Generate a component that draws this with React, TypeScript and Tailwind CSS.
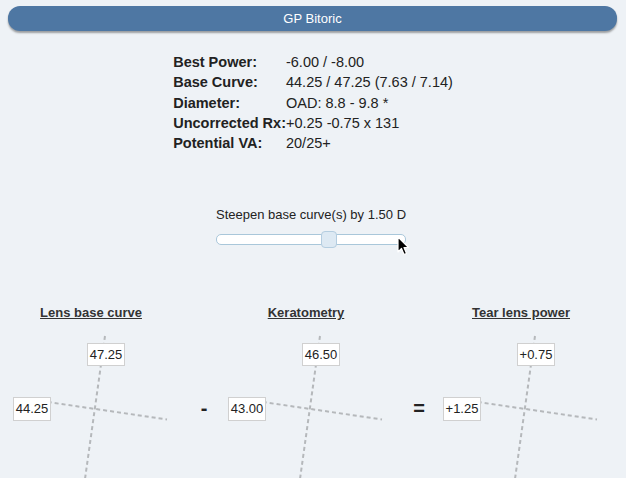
import React from 'react';

const rows: [string, string][] = [
  ['Best Power:', '-6.00 / -8.00'],
  ['Base Curve:', '44.25 / 47.25 (7.63 / 7.14)'],
  ['Diameter:', 'OAD: 8.8 - 9.8 *'],
  ['Uncorrected Rx:', '+0.25 -0.75 x 131'],
  ['Potential VA:', '20/25+'],
];

function Cross({ title, top, left }: { title: string; top: string; left: string }) {
  return (
    <div className="w-[182px] shrink-0 flex flex-col items-center">
      <div className="text-[13px] leading-[16px] font-bold underline text-[#333]">{title}</div>
      <div className="relative mt-[7.5px] w-[182px] h-[200px]">
        {/* cross hairs, tilted by the axis */}
        <svg className="absolute inset-0" width="182" height="200" viewBox="0 0 182 200">
          <g stroke="#b5b8bb" strokeWidth="2" strokeDasharray="4 3" fill="none">
            <line x1="105" y1="7" x2="78" y2="200" />
            <line x1="20" y1="69" x2="167" y2="90.4" />
          </g>
        </svg>
        <div className="absolute left-[87px] top-[14px] w-[38px] h-[23px] flex items-center justify-center bg-white border border-[#d0d0d0] text-[13px] text-[#222]">
          {top}
        </div>
        <div className="absolute left-[13px] top-[68px] w-[38px] h-[24px] flex items-center justify-center bg-white border border-[#d0d0d0] text-[13px] text-[#222]">
          {left}
        </div>
      </div>
    </div>
  );
}

function Op({ sign }: { sign: string }) {
  return (
    <div className="w-[33px] shrink-0 pl-[11px] pt-[94px] flex justify-center text-[20px] leading-[18px] font-bold text-[#222]">
      {sign}
    </div>
  );
}

export default function App() {
  return (
    <div
      className="h-screen overflow-hidden bg-[#eef2f6] text-[#222]"
      style={{ fontFamily: '"Liberation Sans", Arial, sans-serif' }}
    >
      <div className="pt-[6px] px-[8px] pr-[9px]">
        <div className="h-[25px] rounded-[12px] bg-[#4e77a3] shadow-[0_2px_2px_rgba(0,0,0,0.35)] flex items-center justify-center text-white text-[13px]">
          GP Bitoric
        </div>
      </div>

      <div className="mt-[21px] mx-auto w-fit grid grid-cols-[auto_auto] text-[14.5px] leading-[20.25px]">
        {rows.map(([k, v]) => (
          <React.Fragment key={k}>
            <div className="font-bold">{k}</div>
            <div>{v}</div>
          </React.Fragment>
        ))}
      </div>

      <div className="mt-[54px] pr-[5px] flex flex-col items-center">
        <div className="text-[13px] leading-[16px] pl-[1px]">Steepen base curve(s) by 1.50 D</div>
        <div className="relative mt-[11px] ml-[1px] w-[190px] h-[11px] rounded-[5px] bg-white border border-[#a9c7da]">
          <div className="absolute left-[104px] top-[-4px] w-[16px] h-[17px] rounded-[4px] bg-[#dde9f3] border border-[#b4cde0]" />
          {/* mouse pointer */}
          <svg className="absolute left-[180px] top-[1px]" width="13" height="21" viewBox="0 0 13 21">
            <path d="M1 1 L1 16 L4.5 12.5 L7 18.5 L9.5 17.5 L7 11.5 L11.5 11.5 Z" fill="#000" stroke="#fff" strokeWidth="1.2" strokeLinejoin="round" />
          </svg>
        </div>
      </div>

      <div className="mt-[60px] flex">
        <Cross title="Lens base curve" top="47.25" left="44.25" />
        <Op sign="-" />
        <Cross title="Keratometry" top="46.50" left="43.00" />
        <Op sign="=" />
        <Cross title="Tear lens power" top="+0.75" left="+1.25" />
      </div>
    </div>
  );
}
